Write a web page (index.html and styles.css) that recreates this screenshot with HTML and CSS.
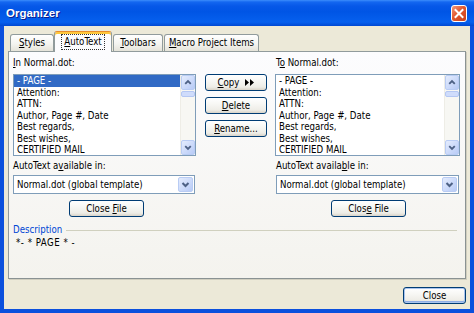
FILE: index.html
```html
<!DOCTYPE html>
<html lang="en">
<head>
<meta charset="utf-8">
<title>Organizer</title>
<link rel="stylesheet" href="styles.css">
</head>
<body>
<div class="window">
  <div class="titlebar">
    <span class="title">Organizer</span>
    <span class="xbtn"><svg width="14" height="15" viewBox="0 0 14 15"><path d="M3.5 4 L10.5 11 M10.5 4 L3.5 11" stroke="#fff" stroke-width="2" stroke-linecap="square"/></svg></span>
  </div>
  <div class="client">
    <div class="tabs">
      <div class="tab t-styles"><u>S</u>tyles</div>
      <div class="tab active t-auto"><span class="focus"><u>A</u>utoText</span></div>
      <div class="tab t-toolbars"><u>T</u>oolbars</div>
      <div class="tab t-macro"><u>M</u>acro Project Items</div>
    </div>
    <div class="panel">
      <div class="cols">
        <div class="col left">
          <div class="label"><u>I</u>n Normal.dot:</div>
          <div class="list">
            <div class="items">
              <div class="item sel">- PAGE -</div>
              <div class="item">Attention:</div>
              <div class="item">ATTN:</div>
              <div class="item">Author, Page #, Date</div>
              <div class="item">Best regards,</div>
              <div class="item">Best wishes,</div>
              <div class="item">CERTIFIED MAIL</div>
            </div>
            <div class="vscroll">
              <div class="sbtn"><svg width="13" height="13" viewBox="0 0 13 13"><path d="M3.5 8 L6.5 5 L9.5 8" fill="none" stroke="#4D6185" stroke-width="2"/></svg></div>
              <div class="thumb"></div>
              <div class="track"></div>
              <div class="sbtn"><svg width="13" height="13" viewBox="0 0 13 13"><path d="M3.5 5 L6.5 8 L9.5 5" fill="none" stroke="#4D6185" stroke-width="2"/></svg></div>
            </div>
          </div>
          <div class="label label2">AutoText a<u>v</u>ailable in:</div>
          <div class="combo"><span class="ctext">Normal.dot (global template)</span><span class="dd"><svg width="13" height="15" viewBox="0 0 13 15"><path d="M3.5 6 L6.5 9 L9.5 6" fill="none" stroke="#4D6185" stroke-width="2"/></svg></span></div>
          <div class="btnrow"><button class="btn closefile"><span>Close <u>F</u>ile</span></button></div>
        </div>
        <div class="mid">
          <button class="btn action"><span><u>C</u>opy</span><svg class="arrows" width="9" height="7" viewBox="0 0 9 7"><path d="M0 0 L4 3.5 L0 7 Z M5 0 L9 3.5 L5 7 Z" fill="#000"/></svg></button>
          <button class="btn action"><span><u>D</u>elete</span></button>
          <button class="btn action"><span><u>R</u>ename...</span></button>
        </div>
        <div class="col right">
          <div class="label">T<u>o</u> Normal.dot:</div>
          <div class="list">
            <div class="items">
              <div class="item">- PAGE -</div>
              <div class="item">Attention:</div>
              <div class="item">ATTN:</div>
              <div class="item">Author, Page #, Date</div>
              <div class="item">Best regards,</div>
              <div class="item">Best wishes,</div>
              <div class="item">CERTIFIED MAIL</div>
            </div>
            <div class="vscroll">
              <div class="sbtn"><svg width="13" height="13" viewBox="0 0 13 13"><path d="M3.5 8 L6.5 5 L9.5 8" fill="none" stroke="#4D6185" stroke-width="2"/></svg></div>
              <div class="thumb"></div>
              <div class="track"></div>
              <div class="sbtn"><svg width="13" height="13" viewBox="0 0 13 13"><path d="M3.5 5 L6.5 8 L9.5 5" fill="none" stroke="#4D6185" stroke-width="2"/></svg></div>
            </div>
          </div>
          <div class="label label2">AutoText availa<u>b</u>le in:</div>
          <div class="combo"><span class="ctext">Normal.dot (global template)</span><span class="dd"><svg width="13" height="15" viewBox="0 0 13 15"><path d="M3.5 6 L6.5 9 L9.5 6" fill="none" stroke="#4D6185" stroke-width="2"/></svg></span></div>
          <div class="btnrow"><button class="btn closefile"><span>Clos<u>e</u> File</span></button></div>
        </div>
      </div>
      <div class="deschead"><span class="desctitle">Description</span><span class="rule"></span></div>
      <div class="desctext">*- * PAGE * -</div>
    </div>
    <div class="footer"><button class="btn closebtn"><span>Close</span></button></div>
  </div>
</div>
</body>
</html>
```
FILE: styles.css
```css
* { box-sizing: border-box; }
body { margin: 0; background: #fff; }
u { text-decoration: underline; text-underline-offset: 1px; }

.window {
  width: 474px;
  height: 313px;
  background: #0B50DD;
  display: flex;
  flex-direction: column;
  font-family: "DejaVu Sans Condensed", "Liberation Sans", sans-serif;
  font-size: 9.6px;
  color: #000;
}

.titlebar {
  flex: none;
  height: 26px;
  display: flex;
  align-items: center;
  justify-content: space-between;
  padding: 0 7px 0 6px;
  background: linear-gradient(#3C8DFB 0, #1467F0 2px, #0758E8 6px, #0055E5 45%, #0660EE 85%, #0048D2 100%);
}
.title {
  color: #fff;
  font: bold 11.5px "Liberation Sans", sans-serif;
  text-shadow: 1px 1px #0A1E8C;
  margin-top: -1px;
}
.xbtn {
  width: 16px;
  height: 17px;
  border: 1px solid #fff;
  border-radius: 3px;
  background: linear-gradient(135deg, #F39A7C 0%, #E2582F 45%, #C9411A 100%);
  display: flex;
  align-items: center;
  justify-content: center;
  margin-top: 1px;
}

.client {
  flex: 1;
  margin: 0 4px 4px;
  background: #ECE9D8;
  padding: 5px 4px 5px 4px;
  display: flex;
  flex-direction: column;
}

.tabs {
  flex: none;
  height: 21px;
  margin-bottom: -1px;
  display: flex;
  align-items: flex-start;
  padding-left: 2px;
}
.tab {
  height: 17px;
  margin-top: 3px;
  padding: 0;
  text-align: center;
  border: 1px solid #919B9C;
  border-bottom: none;
  border-radius: 3px 3px 0 0;
  background: linear-gradient(#FFFFFF, #F4F4F0 55%, #E5E3D9);
  line-height: 16px;
  white-space: nowrap;
}
.t-styles { width: 44px; }
.t-auto { width: 58px; }
.t-toolbars { width: 50px; margin-left: 1px; }
.t-macro { width: 95px; margin-left: 1px; }
.tab.active {
  position: relative;
  z-index: 1;
  height: 21px;
  margin-top: 0;
  padding-top: 2px;
  background: #FCFCFE;
  border-top: 1px solid #E68B2C;
  box-shadow: inset 0 2px #FFC83C;
}
.focus {
  display: inline-block;
  outline: 1px dotted #333;
  outline-offset: 0;
  padding: 0 2px;
  line-height: 14px;
  margin-top: 1px;
}

.panel {
  flex: none;
  height: 228px;
  border: 1px solid #919B9C;
  border-right-color: #8A9293;
  border-bottom-color: #8A9293;
  box-shadow: 1px 1px 0 #D0CEBF;
  background: linear-gradient(#FCFCFE, #F4F3EE);
  padding: 5px 5px 0 4px;
}

.cols { display: flex; }
.col.left { width: 183px; }
.col.right { width: 185px; }
.mid {
  width: 62px;
  margin: 0 8px 0 9px;
  padding-top: 17px;
  display: flex;
  flex-direction: column;
  gap: 6px;
}

.label { height: 12px; line-height: 12px; white-space: nowrap; }
.col.right .label { padding-left: 1px; }
.label2 { margin-top: 4px; }

.list {
  margin-top: 5px;
  height: 82px;
  border: 1px solid #7F9DB9;
  background: #fff;
  display: flex;
}
.items { flex: 1; overflow: hidden; }
.item { line-height: 11.5px; height: 11.5px; padding-left: 3px; white-space: nowrap; }
.item.sel { background: #316AC5; color: #fff; }

.vscroll {
  width: 15px;
  display: flex;
  flex-direction: column;
  background: #F7F7F3;
  border-left: 1px solid #EEEDE6;
}
.sbtn {
  height: 15px;
  flex: none;
  border: 1px solid #B9CCF4;
  border-radius: 2px;
  background: linear-gradient(135deg, #E4ECFD 0%, #CCDAFA 55%, #B8CBF6 100%);
  display: flex;
  align-items: center;
  justify-content: center;
}
.thumb {
  height: 6px;
  flex: none;
  margin-top: 1px;
  border: 1px solid #B4C7F3;
  border-radius: 2px;
  background: #CFDCFB;
}
.track { flex: 1; }

.combo {
  margin-top: 3px;
  height: 19px;
  border: 1px solid #7F9DB9;
  background: #fff;
  display: flex;
  align-items: center;
  padding: 1px;
}
.col.left .combo { width: 182px; }
.col.right .combo { width: 183px; margin-left: 1px; }
.ctext { flex: 1; padding-left: 2px; white-space: nowrap; }
.dd {
  width: 15px;
  height: 15px;
  border: 1px solid #B9CCF4;
  border-radius: 2px;
  background: linear-gradient(135deg, #E4ECFD 0%, #CCDAFA 55%, #B8CBF6 100%);
  display: flex;
  align-items: center;
  justify-content: center;
}

.btn {
  font: inherit;
  color: #000;
  height: 17px;
  padding: 0;
  border: 1px solid #003C74;
  border-radius: 3px;
  background: linear-gradient(#FFFFFF 0%, #F7F7F4 40%, #EEEDE7 80%, #D8D3C8 100%);
  display: flex;
  align-items: center;
  justify-content: center;
  white-space: nowrap;
}
.action { width: 62px; }
.arrows { margin-left: 6px; }
.btnrow { margin-top: 6px; display: flex; justify-content: center; }
.col.left .btnrow { padding-left: 4px; }
.col.right .btnrow { padding-left: 2px; }
.closefile { width: 75px; }

.deschead {
  margin-top: 7px;
  height: 11px;
  display: flex;
  align-items: center;
}
.desctitle { color: #0046D5; line-height: 11px; }
.rule { flex: 1; height: 1px; background: #D0D0BF; margin: 1px 3px 0 4px; }
.desctext { margin-top: 2px; line-height: 11px; padding-left: 3px; letter-spacing: 0.5px; }

.footer { margin-top: 8px; display: flex; justify-content: flex-end; }
.closebtn {
  width: 63px;
  box-shadow: inset 0 0 0 1px #A9C4EE, inset 0 -1px 0 1px #8FAEE6;
}
```
